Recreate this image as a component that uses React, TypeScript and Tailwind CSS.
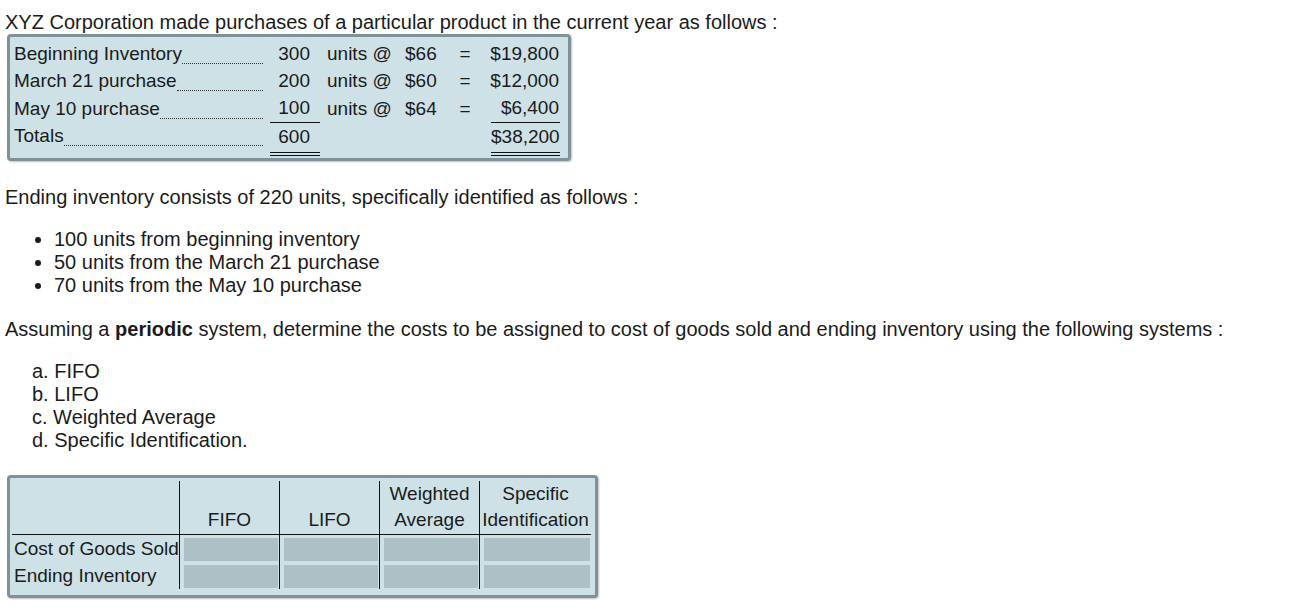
import React from "react";

const purchases = [
  { label: "Beginning Inventory", qty: "300", price: "$66", amount: "$19,800" },
  { label: "March 21 purchase", qty: "200", price: "$60", amount: "$12,000" },
  { label: "May 10 purchase", qty: "100", price: "$64", amount: "$6,400" },
];

const Leader = ({ label }: { label: string }) => (
  <div className="flex h-full w-[256px] items-center pl-[4px] pr-[3px]">
    <span className="whitespace-nowrap">{label}</span>
    <span className="mb-[4px] flex-1 self-end border-b border-dotted border-[#333]" />
  </div>
);

const PurchaseTable = () => (
  <div className="ml-[2px] mt-px w-[564px] rounded-[4px] border-[3px] border-[#7f9297] bg-[#cee1e7] pb-[2px] pt-[3px] text-[19px] shadow-[1px_1px_2px_rgba(0,0,0,0.25)]">
    {purchases.map((p, i) => {
      const last = i === purchases.length - 1;
      return (
        <div key={p.label} className="flex h-[27.5px] items-center">
          <Leader label={p.label} />
          <div className="w-[4px]" />
          <div
            className={`flex h-full w-[50px] items-center justify-end pr-[10px] ${
              last ? "border-b border-[#111]" : ""
            }`}
          >
            {p.qty}
          </div>
          <div className="w-[80px] whitespace-nowrap pl-[7px]">units @</div>
          <div className="w-[50px] pl-[5px]">{p.price}</div>
          <div className="w-[30px] text-center">=</div>
          <div className="w-[11px]" />
          <div
            className={`flex h-full w-[69px] items-center justify-end pr-px ${
              last ? "border-b border-[#111]" : ""
            }`}
          >
            {p.amount}
          </div>
        </div>
      );
    })}
    {/* Totals */}
    <div className="flex h-[33.5px] items-start">
      <div className="h-[27.5px]">
        <Leader label="Totals" />
      </div>
      <div className="w-[4px]" />
      <div className="h-full w-[50px] border-b-[4px] border-double border-[#111] pr-[10px] pt-[3px] text-right">
        600
      </div>
      <div className="w-[171px]" />
      <div className="h-full w-[69px] border-b-[4px] border-double border-[#111] pr-px pt-[3px] text-right">
        $38,200
      </div>
    </div>
  </div>
);

const columns = [
  { top: "", bottom: "FIFO", w: "w-[100px]", line: true },
  { top: "", bottom: "LIFO", w: "w-[100px]", line: true },
  { top: "Weighted", bottom: "Average", w: "w-[100px]", line: true },
  { top: "Specific", bottom: "Identification", w: "w-[111px]", line: false },
];

const rows = ["Cost of Goods Sold", "Ending Inventory"];

const AnswerTable = () => (
  <div className="ml-[2px] mt-[23px] w-[591px] rounded-[4px] border-[3px] border-[#7f9297] bg-[#cee1e7] pb-[6px] pl-[2px] pr-[4px] pt-[3px] text-[19px] shadow-[1px_1px_2px_rgba(0,0,0,0.25)]">
    <div className="flex border-b border-[#111]">
      <div className="h-[53px] w-[168px] border-r border-[#111]" />
      {columns.map((c) => (
        <div
          key={c.bottom}
          className={`flex h-[53px] ${c.w} flex-col items-center justify-end pb-px leading-[26px] ${
            c.line ? "border-r border-[#111]" : ""
          }`}
        >
          {c.top && <span>{c.top}</span>}
          <span>{c.bottom}</span>
        </div>
      ))}
    </div>
    {rows.map((r) => (
      <div key={r} className="flex h-[27px]">
        <div className="flex w-[168px] items-center whitespace-nowrap border-r border-[#111] pl-[2px]">
          {r}
        </div>
        {columns.map((c) => (
          <div
            key={c.bottom}
            className={`${c.w} pl-[4px] pr-px pt-[3px] ${c.line ? "border-r border-[#111]" : ""}`}
          >
            <div className="h-[23px] bg-[#adc0c6]" />
          </div>
        ))}
      </div>
    ))}
  </div>
);

export default function App() {
  return (
    <div className="min-h-screen bg-white pl-[5px] pt-[11px] font-['Liberation_Sans',Arial,sans-serif] text-[20px] leading-[22px] text-[#1b1b1b]">
      <p>XYZ Corporation made purchases of a particular product in the current year as follows :</p>
      <PurchaseTable />

      <p className="mt-[25px]">Ending inventory consists of 220 units, specifically identified as follows :</p>
      <ul className="mt-[20px] list-disc pl-[49px] leading-[23px]">
        <li>100 units from beginning inventory</li>
        <li>50 units from the March 21 purchase</li>
        <li>70 units from the May 10 purchase</li>
      </ul>

      <p className="mt-[21px]">
        Assuming a <b>periodic</b> system, determine the costs to be assigned to cost of goods sold and ending
        inventory using the following systems :
      </p>
      <div className="mt-[20px] pl-[27px] leading-[23px]">
        <div>a. FIFO</div>
        <div>b. LIFO</div>
        <div>c. Weighted Average</div>
        <div>d. Specific Identification.</div>
      </div>

      <AnswerTable />
    </div>
  );
}
